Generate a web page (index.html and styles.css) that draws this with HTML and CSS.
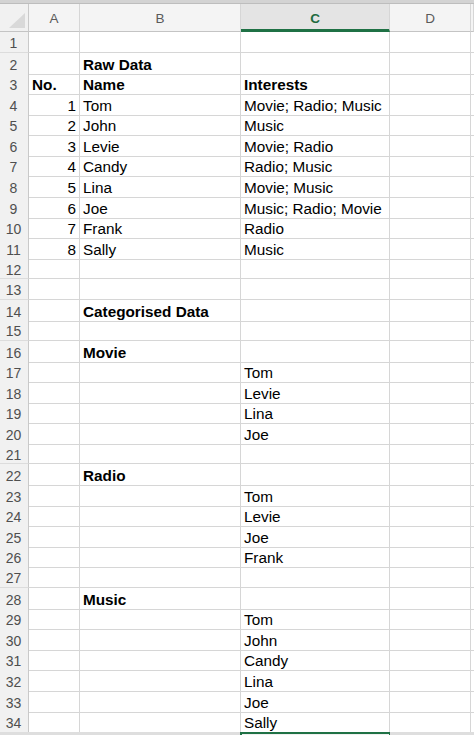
FILE: index.html
```html
<!DOCTYPE html>
<html>
<head>
<meta charset="utf-8">
<link rel="stylesheet" href="styles.css">
</head>
<body>
<div class="top-strip"></div>
<div class="sheet">
  <div class="row head">
    <div class="corner"><span class="tri"></span></div>
    <div class="colh">A</div>
    <div class="colh">B</div>
    <div class="colh sel">C</div>
    <div class="colh">D</div>
    <div class="colh last"></div>
  </div>

  <div class="row"><div class="rn">1</div><div class="c"></div><div class="c"></div><div class="c"></div><div class="c"></div><div class="c"></div></div>
  <div class="row"><div class="rn">2</div><div class="c"></div><div class="c b">Raw Data</div><div class="c"></div><div class="c"></div><div class="c"></div></div>
  <div class="row"><div class="rn">3</div><div class="c b">No.</div><div class="c b">Name</div><div class="c b">Interests</div><div class="c"></div><div class="c"></div></div>
  <div class="row"><div class="rn">4</div><div class="c num">1</div><div class="c">Tom</div><div class="c">Movie; Radio; Music</div><div class="c"></div><div class="c"></div></div>
  <div class="row"><div class="rn">5</div><div class="c num">2</div><div class="c">John</div><div class="c">Music</div><div class="c"></div><div class="c"></div></div>
  <div class="row"><div class="rn">6</div><div class="c num">3</div><div class="c">Levie</div><div class="c">Movie; Radio</div><div class="c"></div><div class="c"></div></div>
  <div class="row"><div class="rn">7</div><div class="c num">4</div><div class="c">Candy</div><div class="c">Radio; Music</div><div class="c"></div><div class="c"></div></div>
  <div class="row"><div class="rn">8</div><div class="c num">5</div><div class="c">Lina</div><div class="c">Movie; Music</div><div class="c"></div><div class="c"></div></div>
  <div class="row"><div class="rn">9</div><div class="c num">6</div><div class="c">Joe</div><div class="c">Music; Radio; Movie</div><div class="c"></div><div class="c"></div></div>
  <div class="row"><div class="rn">10</div><div class="c num">7</div><div class="c">Frank</div><div class="c">Radio</div><div class="c"></div><div class="c"></div></div>
  <div class="row"><div class="rn">11</div><div class="c num">8</div><div class="c">Sally</div><div class="c">Music</div><div class="c"></div><div class="c"></div></div>
  <div class="row"><div class="rn">12</div><div class="c"></div><div class="c"></div><div class="c"></div><div class="c"></div><div class="c"></div></div>
  <div class="row"><div class="rn">13</div><div class="c"></div><div class="c"></div><div class="c"></div><div class="c"></div><div class="c"></div></div>
  <div class="row"><div class="rn">14</div><div class="c"></div><div class="c b">Categorised Data</div><div class="c"></div><div class="c"></div><div class="c"></div></div>
  <div class="row"><div class="rn">15</div><div class="c"></div><div class="c"></div><div class="c"></div><div class="c"></div><div class="c"></div></div>
  <div class="row"><div class="rn">16</div><div class="c"></div><div class="c b">Movie</div><div class="c"></div><div class="c"></div><div class="c"></div></div>
  <div class="row"><div class="rn">17</div><div class="c"></div><div class="c"></div><div class="c">Tom</div><div class="c"></div><div class="c"></div></div>
  <div class="row"><div class="rn">18</div><div class="c"></div><div class="c"></div><div class="c">Levie</div><div class="c"></div><div class="c"></div></div>
  <div class="row"><div class="rn">19</div><div class="c"></div><div class="c"></div><div class="c">Lina</div><div class="c"></div><div class="c"></div></div>
  <div class="row"><div class="rn">20</div><div class="c"></div><div class="c"></div><div class="c">Joe</div><div class="c"></div><div class="c"></div></div>
  <div class="row"><div class="rn">21</div><div class="c"></div><div class="c"></div><div class="c"></div><div class="c"></div><div class="c"></div></div>
  <div class="row"><div class="rn">22</div><div class="c"></div><div class="c b">Radio</div><div class="c"></div><div class="c"></div><div class="c"></div></div>
  <div class="row"><div class="rn">23</div><div class="c"></div><div class="c"></div><div class="c">Tom</div><div class="c"></div><div class="c"></div></div>
  <div class="row"><div class="rn">24</div><div class="c"></div><div class="c"></div><div class="c">Levie</div><div class="c"></div><div class="c"></div></div>
  <div class="row"><div class="rn">25</div><div class="c"></div><div class="c"></div><div class="c">Joe</div><div class="c"></div><div class="c"></div></div>
  <div class="row"><div class="rn">26</div><div class="c"></div><div class="c"></div><div class="c">Frank</div><div class="c"></div><div class="c"></div></div>
  <div class="row"><div class="rn">27</div><div class="c"></div><div class="c"></div><div class="c"></div><div class="c"></div><div class="c"></div></div>
  <div class="row"><div class="rn">28</div><div class="c"></div><div class="c b">Music</div><div class="c"></div><div class="c"></div><div class="c"></div></div>
  <div class="row"><div class="rn">29</div><div class="c"></div><div class="c"></div><div class="c">Tom</div><div class="c"></div><div class="c"></div></div>
  <div class="row"><div class="rn">30</div><div class="c"></div><div class="c"></div><div class="c">John</div><div class="c"></div><div class="c"></div></div>
  <div class="row"><div class="rn">31</div><div class="c"></div><div class="c"></div><div class="c">Candy</div><div class="c"></div><div class="c"></div></div>
  <div class="row"><div class="rn">32</div><div class="c"></div><div class="c"></div><div class="c">Lina</div><div class="c"></div><div class="c"></div></div>
  <div class="row"><div class="rn">33</div><div class="c"></div><div class="c"></div><div class="c">Joe</div><div class="c"></div><div class="c"></div></div>
  <div class="row"><div class="rn">34</div><div class="c"></div><div class="c"></div><div class="c">Sally</div><div class="c"></div><div class="c"></div></div>

  <div class="row foot">
    <div class="fcell"></div>
    <div class="fcell"></div>
    <div class="fcell"></div>
    <div class="fcell fsel"></div>
    <div class="fcell"></div>
    <div class="fcell"></div>
  </div>
</div>
</body>
</html>
```

FILE: styles.css
```css
html, body {
  margin: 0;
  padding: 0;
  background: #ffffff;
  overflow: hidden;
}

body {
  width: 474px;
  height: 735px;
  font-family: "Liberation Sans", Arial, sans-serif;
  color: #000;
}

.top-strip {
  height: 4px;
  background: #d3d3d3;
  border-bottom: 1px solid #bdbdbd;
  box-sizing: border-box;
}

.sheet {
  display: flex;
  flex-direction: column;
}

.row {
  display: grid;
  grid-template-columns: 29px 51px 161px 149px 81px 1fr;
  height: 20.59px;
}

.row.head {
  height: 28px;
}

.corner {
  position: relative;
  background: #f1f1f1;
  border-right: 1px solid #c9c9c9;
  border-bottom: 1px solid #c4c4c4;
  box-sizing: border-box;
}

.tri {
  position: absolute;
  right: 3px;
  bottom: 3px;
  width: 0;
  height: 0;
  border-left: 16px solid transparent;
  border-bottom: 15px solid #d9d9d9;
}

.colh {
  background: #f4f4f4;
  border-right: 1px solid #d6d6d6;
  border-bottom: 1px solid #c4c4c4;
  box-sizing: border-box;
  display: flex;
  align-items: center;
  justify-content: center;
  font-size: 13.5px;
  color: #5a5a5a;
  padding-top: 2px;
}

.colh.sel {
  background: #e4e4e4;
  color: #1d6b3f;
  font-weight: bold;
  border-bottom: 3px solid #1f7145;
  padding-top: 4px;
}

.rn {
  background: #f1f1f1;
  border-right: 1px solid #c9c9c9;
  border-bottom: 1px solid #dcdcdc;
  box-sizing: border-box;
  display: flex;
  align-items: center;
  justify-content: center;
  font-size: 14px;
  color: #4f4f4f;
  padding-right: 1px;
  padding-top: 3px;
}

.c {
  border-right: 1px solid #d6d6d6;
  border-bottom: 1px solid #d6d6d6;
  box-sizing: border-box;
  font-size: 15.3px;
  line-height: 18px;
  padding-top: 3px;
  padding-left: 3px;
  white-space: nowrap;
}

.c.num {
  text-align: right;
  padding-left: 0;
  padding-right: 3px;
}

.c.b {
  font-weight: bold;
}

.row.foot {
  height: 3px;
}

.fcell {
  background: #dedede;
}

.fcell.fsel {
  background: #f0f0f0;
  border-top: 2px solid #1f7145;
  border-left: 2px solid #1f7145;
  border-right: 2px solid #1f7145;
  box-sizing: border-box;
  margin-left: -1px;
  margin-right: -1px;
}
```
